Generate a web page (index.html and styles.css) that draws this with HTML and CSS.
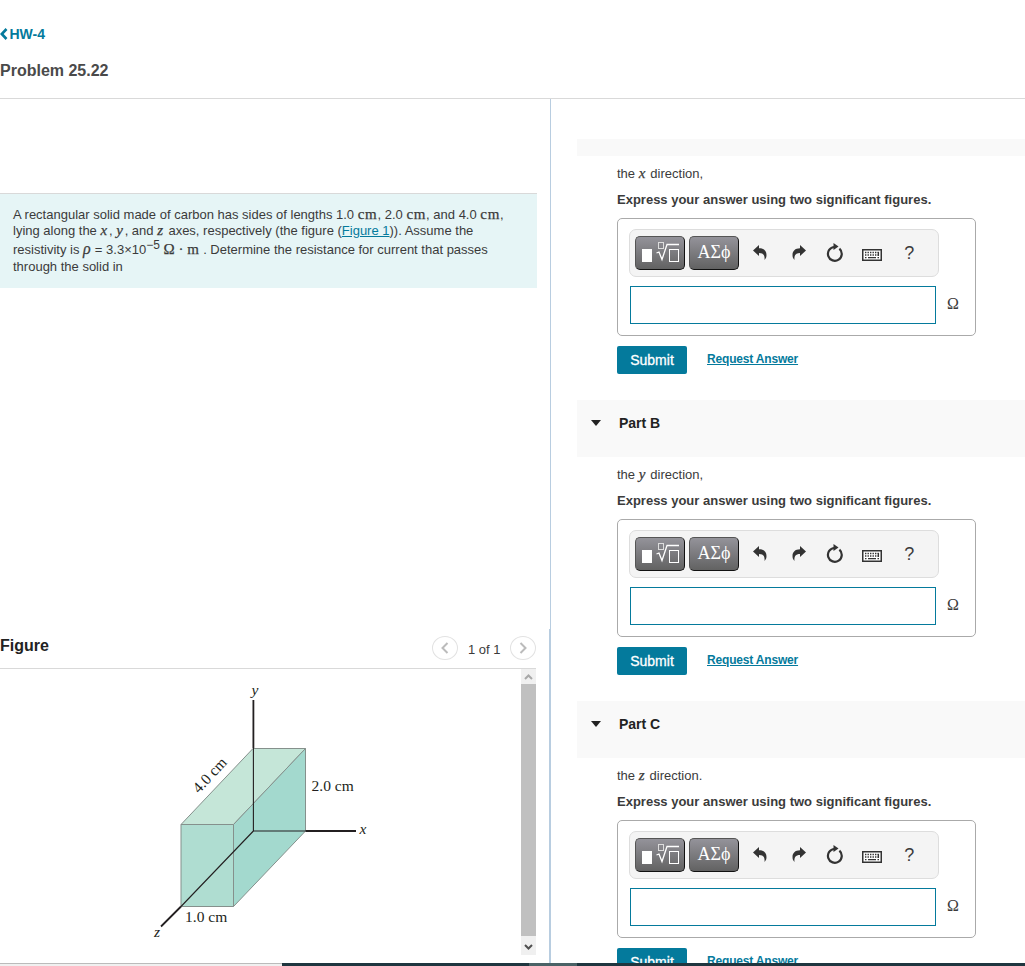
FILE: index.html
```html
<!DOCTYPE html>
<html lang="en">
<head>
    <meta charset="UTF-8">
    <meta name="viewport" content="width=device-width, initial-scale=1.0">
    <title>Problem 25.22</title>
    <link rel="stylesheet" href="styles.css">
</head>
<body>
    <svg class="icon-defs" width="0" height="0">
        <symbol id="icon-undo" viewBox="0 0 14 15">
            <path d="M0 5.5 L6 0 V3.2 C11 3.2 13.5 6 13.5 10 C13.5 12 13 13.5 11.5 15 C12 10.5 10.5 8 6 8 V11 Z"/>
        </symbol>
        <symbol id="icon-redo" viewBox="0 0 14 15">
            <path d="M14 5.5 L8 0 V3.2 C3 3.2 .5 6 .5 10 C.5 12 1 13.5 2.5 15 C2 10.5 3.5 8 8 8 V11 Z"/>
        </symbol>
        <symbol id="icon-reset" viewBox="0 0 17 19">
            <path d="M13.4 5.7 A6.9 6.9 0 1 1 8.5 4" fill="none" stroke="#333" stroke-width="2.2"/>
            <path d="M7.5 0 L12.5 3.6 L7.5 7 Z"/>
        </symbol>
        <symbol id="icon-keyboard" viewBox="0 0 20 12">
            <rect x=".75" y=".75" width="18.5" height="10.5" fill="#fff" stroke="#333" stroke-width="1.5"/>
            <path d="M3 3.5 H17 M3 6 H17" stroke="#333" stroke-width="1.3" stroke-dasharray="1.4 1.1"/>
            <path d="M3 8.7 H4.5 M6 8.7 H14 M15.5 8.7 H17 M16.4 3 V7" stroke="#333" stroke-width="1.3"/>
        </symbol>
        <symbol id="icon-template" viewBox="0 0 38 24">
            <rect x="0" y="8" width="10" height="13" fill="#fff"/>
            <rect x="16.5" y="1.5" width="5" height="6" fill="none" stroke="#ddd"/>
            <path d="M14.5 12 L17 11 L20 18.5 L25 3.5 H37" fill="none" stroke="#fff" stroke-width="1.3"/>
            <rect x="27.5" y="8.5" width="9" height="12" fill="none" stroke="#fff"/>
        </symbol>
    </svg>

    <header class="page-header">
        <a class="back-link" href="#"><svg class="back-icon" viewBox="0 0 8 12"><path d="M6.5 1 L1.8 6 L6.5 11"/></svg>HW-4</a>
        <h1>Problem 25.22</h1>
    </header>

    <main class="columns">
        <section class="left">
            <div class="problem-pane">
                <div class="problem">
                    <div class="line line-1">A rectangular solid made of carbon has sides of lengths 1.0 <span class="unit">cm</span>, 2.0 <span class="unit">cm</span>, and 4.0 <span class="unit">cm</span>,</div>
                    <div class="line line-2">lying along the <i class="math">x</i>, <i class="math">y</i>, and <i class="math">z</i> axes, respectively (the figure (<a href="#">Figure 1</a>)). Assume the</div>
                    <div class="line line-3">resistivity is <i class="math rho">ρ</i> = 3.3×10<sup>−5</sup> <span class="unit ohm">Ω · m</span> . Determine the resistance for current that passes</div>
                    <div class="line line-4">through the solid in</div>
                </div>
            </div>

            <div class="figure-pane">
                <div class="figure-header">
                    <h2>Figure</h2>
                    <div class="pager">
                        <button class="page-btn"><svg viewBox="0 0 8 12"><path d="M6.5 1 L1.5 6 L6.5 11"/></svg></button>
                        <span>1 of 1</span>
                        <button class="page-btn"><svg viewBox="0 0 8 12"><path d="M1.5 1 L6.5 6 L1.5 11"/></svg></button>
                    </div>
                </div>
                <div class="figure-body">
                    <svg class="solid" viewBox="0 0 521 286">
                        <g stroke="#85908c" stroke-width="1">
                            <polygon points="253,79.5 305.5,79.5 233.5,155.5 181,155.5" fill="#c5e6d8"/>
                            <polygon points="181,155.5 233.5,155.5 233.5,237.5 181,237.5" fill="#afddd1"/>
                            <polygon points="305.5,79.5 305.5,162 233.5,237.5 233.5,155.5" fill="#a3d9ce"/>
                        </g>
                        <g stroke="#231f20" fill="none">
                            <path d="M253.4 79 V162 H305.5 M253.4 162 L181 237.5" stroke-width="1.1"/>
                            <path d="M253.4 31 V79 M305.5 162 H356 M181 237.5 L161 257.5" stroke-width="1.8"/>
                        </g>
                        <g class="labels">
                            <text class="axis" x="251.5" y="26">y</text>
                            <text class="axis" x="359.5" y="165">x</text>
                            <text class="axis" x="154" y="268">z</text>
                            <text x="311.5" y="122">2.0 cm</text>
                            <text x="185" y="252.5">1.0 cm</text>
                            <text transform="translate(199 125) rotate(-47)">4.0 cm</text>
                        </g>
                    </svg>
                    <div class="scrollbar">
                        <svg class="arrow arrow-up" viewBox="0 0 9 6"><path d="M1 5 L4.5 1.5 L8 5"/></svg>
                        <div class="thumb"></div>
                        <svg class="arrow arrow-down" viewBox="0 0 9 6"><path d="M1 1 L4.5 4.5 L8 1"/></svg>
                    </div>
                </div>
            </div>
        </section>

        <section class="right">
            <div class="part-header part-header-cut"></div>
            <div class="part">
                <p class="prompt">the <i class="math">x</i> direction,</p>
                <p class="instructions">Express your answer using two significant figures.</p>
                <div class="answer-box">
                    <div class="toolbar">
                        <button class="tool-btn"><svg class="template"><use href="#icon-template"/></svg></button>
                        <button class="tool-btn">ΑΣϕ</button>
                        <span class="tool"><svg class="turn"><use href="#icon-undo"/></svg></span>
                        <span class="tool"><svg class="turn redo"><use href="#icon-redo"/></svg></span>
                        <span class="tool"><svg class="reset"><use href="#icon-reset"/></svg></span>
                        <span class="tool"><svg class="keyboard"><use href="#icon-keyboard"/></svg></span>
                        <span class="tool help">?</span>
                    </div>
                    <div class="answer-row"><input type="text"><span class="answer-unit">Ω</span></div>
                </div>
                <div class="actions"><button class="submit">Submit</button><a href="#">Request Answer</a></div>
            </div>

            <div class="part-header"><span class="caret"></span><h3>Part B</h3></div>
            <div class="part">
                <p class="prompt">the <i class="math">y</i> direction,</p>
                <p class="instructions">Express your answer using two significant figures.</p>
                <div class="answer-box">
                    <div class="toolbar">
                        <button class="tool-btn"><svg class="template"><use href="#icon-template"/></svg></button>
                        <button class="tool-btn">ΑΣϕ</button>
                        <span class="tool"><svg class="turn"><use href="#icon-undo"/></svg></span>
                        <span class="tool"><svg class="turn redo"><use href="#icon-redo"/></svg></span>
                        <span class="tool"><svg class="reset"><use href="#icon-reset"/></svg></span>
                        <span class="tool"><svg class="keyboard"><use href="#icon-keyboard"/></svg></span>
                        <span class="tool help">?</span>
                    </div>
                    <div class="answer-row"><input type="text"><span class="answer-unit">Ω</span></div>
                </div>
                <div class="actions"><button class="submit">Submit</button><a href="#">Request Answer</a></div>
            </div>

            <div class="part-header"><span class="caret"></span><h3>Part C</h3></div>
            <div class="part">
                <p class="prompt">the <i class="math">z</i> direction.</p>
                <p class="instructions">Express your answer using two significant figures.</p>
                <div class="answer-box">
                    <div class="toolbar">
                        <button class="tool-btn"><svg class="template"><use href="#icon-template"/></svg></button>
                        <button class="tool-btn">ΑΣϕ</button>
                        <span class="tool"><svg class="turn"><use href="#icon-undo"/></svg></span>
                        <span class="tool"><svg class="turn redo"><use href="#icon-redo"/></svg></span>
                        <span class="tool"><svg class="reset"><use href="#icon-reset"/></svg></span>
                        <span class="tool"><svg class="keyboard"><use href="#icon-keyboard"/></svg></span>
                        <span class="tool help">?</span>
                    </div>
                    <div class="answer-row"><input type="text"><span class="answer-unit">Ω</span></div>
                </div>
                <div class="actions"><button class="submit">Submit</button><a href="#">Request Answer</a></div>
            </div>
        </section>
    </main>

    <footer class="bottom-bar"><span class="bar-light"></span><span class="bar-dark"></span><span class="bar-mid"></span><span class="bar-dark bar-rest"></span></footer>
</body>
</html>
```

FILE: styles.css
```css
:root {
    --teal: #047a9c;
    --text: #3b3b3b;
    --line: #d9d9d9;
    --divider: #b8cde0;
}

* {
    box-sizing: border-box;
}

body {
    margin: 0;
    height: 966px;
    overflow: hidden;
    display: flex;
    flex-direction: column;
    background: #fff;
    color: var(--text);
    font-family: "Liberation Sans", Arial, sans-serif;
    font-size: 13px;
}

h1, h2, h3, p {
    margin: 0;
}

a {
    color: var(--teal);
}

button {
    font-family: inherit;
    padding: 0;
}

.icon-defs {
    display: none;
}

.page-header {
    height: 99px;
    flex: none;
    padding-top: 25px;
    border-bottom: 1px solid var(--line);
}

.back-link {
    display: flex;
    align-items: center;
    gap: 1.5px;
    height: 18px;
    font-size: 14px;
    font-weight: bold;
    text-decoration: none;
}

.back-icon {
    width: 8px;
    height: 12px;
    fill: none;
    stroke: var(--teal);
    stroke-width: 2.6;
}

.page-header h1 {
    margin-top: 18px;
    font-size: 16px;
    line-height: 20px;
    color: #4a4a4a;
}

.columns {
    flex: 1;
    min-height: 0;
    display: flex;
}

.left {
    width: 551px;
    flex: none;
    display: flex;
    flex-direction: column;
}

.problem-pane {
    height: 530px;
    padding: 94px 13px 0 0;
    border-right: 1px solid var(--divider);
}

.problem {
    height: 95px;
    padding: 13px 0 0 13px;
    background: #e6f5f6;
    border-top: 1px solid var(--line);
}

.line {
    white-space: nowrap;
    height: 16px;
    line-height: 16px;
}

.line-3 {
    height: 20px;
    line-height: 22px;
}

.line sup {
    font-size: 12px;
    line-height: 0;
    vertical-align: 5px;
}

.math, .unit {
    font-family: "Liberation Serif", serif;
    font-size: 15px;
    line-height: 0;
    -webkit-text-stroke: 0.25px;
}

.unit {
    letter-spacing: 0.7px;
}

.math {
    letter-spacing: 1.8px;
}

.rho {
    font-size: 16px;
    letter-spacing: 0.5px;
}

.prompt .math {
    letter-spacing: 1.4px;
}

.ohm {
    word-spacing: -1.4px;
}

.figure-pane {
    flex: 1;
    min-height: 0;
    border-right: 2px solid var(--divider);
    padding-right: 13px;
}

.figure-header {
    height: 40px;
    display: flex;
    justify-content: space-between;
    border-bottom: 1px solid var(--line);
}

.figure-header h2 {
    font-size: 16px;
    line-height: 34px;
    color: #222;
}

.pager {
    display: flex;
    align-items: center;
    gap: 9.5px;
    height: 38px;
    font-size: 13px;
}

.pager span {
    padding-top: 3px;
}

.page-btn {
    width: 26px;
    height: 24px;
    display: flex;
    align-items: center;
    justify-content: center;
    background: #fff;
    border: 1px solid #e2e2e2;
    border-radius: 50%;
}

.page-btn svg {
    width: 8px;
    height: 12px;
    fill: none;
    stroke: #bbb;
    stroke-width: 2;
}

.figure-body {
    display: flex;
    height: 286px;
}

.solid {
    width: 521px;
    height: 286px;
}

.labels {
    font-family: "Liberation Serif", serif;
    font-size: 15.5px;
    fill: #231f20;
}

.axis {
    font-style: italic;
}

.scrollbar {
    width: 15px;
    display: flex;
    flex-direction: column;
    align-items: center;
    background: #f0f0f0;
}

.thumb {
    width: 15px;
    height: 252px;
    background: #c0c0c0;
}

.arrow {
    width: 9px;
    height: 6px;
    fill: none;
    stroke-width: 2;
}

.arrow-up {
    margin: 5px 0 4px;
    stroke: #a8a8a8;
}

.arrow-down {
    margin-top: 8px;
    stroke: #505050;
}

.right {
    flex: 1;
    min-width: 0;
    overflow: hidden;
    padding: 40px 0 0 26px;
}

.part-header {
    height: 57px;
    display: flex;
    align-items: flex-start;
    gap: 18px;
    padding: 13px 0 0 14px;
    background: #f9f9f9;
}

.part-header-cut {
    height: 17px;
    padding: 0;
}

.part-header h3 {
    font-size: 14px;
    line-height: 20px;
    color: #222;
}

.caret {
    margin-top: 7px;
    border: solid transparent;
    border-width: 6px 5.5px 0;
    border-top-color: #222;
}

.part {
    height: 244px;
    padding: 10px 0 0 40px;
}

.prompt, .instructions {
    height: 16px;
    line-height: 16px;
}

.instructions {
    margin: 10px 0;
    font-weight: bold;
    white-space: nowrap;
}

.answer-box {
    width: 359px;
    height: 118px;
    padding: 10px 11px;
    border: 1px solid #aaa;
    border-radius: 5px;
}

.toolbar {
    width: 310px;
    height: 48px;
    display: flex;
    align-items: center;
    padding-left: 5px;
    background: #f4f4f4;
    border: 1px solid #ddd;
    border-radius: 7px;
}

.tool-btn {
    width: 50px;
    height: 34px;
    margin-right: 4px;
    display: flex;
    align-items: center;
    justify-content: center;
    color: #fff;
    font: 18px "Liberation Serif", serif;
    background: linear-gradient(#94939a, #626262);
    border: 1px solid #111;
    border-top-color: #555;
    border-left-color: #555;
    border-radius: 5px;
}

.tool-btn + .tool-btn {
    margin-right: 2.5px;
    padding-bottom: 2px;
}

.tool {
    width: 37.3px;
    display: flex;
    justify-content: center;
}

.tool svg {
    fill: #333;
}

.template {
    width: 38px;
    height: 24px;
    margin: 0 0 0 2px;
}

.turn {
    width: 14px;
    height: 15px;
    margin-bottom: 1px;
}

.redo {
    margin-left: 3px;
}

.reset {
    width: 17px;
    height: 19px;
    margin-bottom: 2px;
}

.keyboard {
    width: 20px;
    height: 12px;
    margin-top: 4px;
}

.help {
    font-size: 18px;
}

.answer-row {
    display: flex;
    align-items: center;
    margin: 9px 0 0 1px;
}

.answer-row input {
    width: 306px;
    height: 38px;
    border: 1px solid var(--teal);
    background: #fff;
}

.answer-unit {
    margin-left: 11px;
    padding-bottom: 3px;
    font: 16px "Liberation Serif", serif;
}

.actions {
    display: flex;
    align-items: center;
    gap: 20px;
    margin-top: 10px;
}

.actions a {
    font-size: 12px;
    font-weight: bold;
    letter-spacing: -0.18px;
    padding-bottom: 3px;
}

.submit {
    width: 70px;
    height: 28px;
    color: #fff;
    font-size: 14px;
    -webkit-text-stroke: 0.3px;
    background: var(--teal);
    border: none;
    border-radius: 2px;
}

.bottom-bar {
    height: 3px;
    flex: none;
    display: flex;
}

.bar-light {
    width: 282px;
    background: #f0f0f0;
    border-top: 1px solid #bbb;
}

.bar-dark {
    width: 247px;
    background: #1f363f;
}

.bar-mid {
    width: 48px;
    background: #4a6266;
}

.bar-rest {
    flex: 1;
}
```
